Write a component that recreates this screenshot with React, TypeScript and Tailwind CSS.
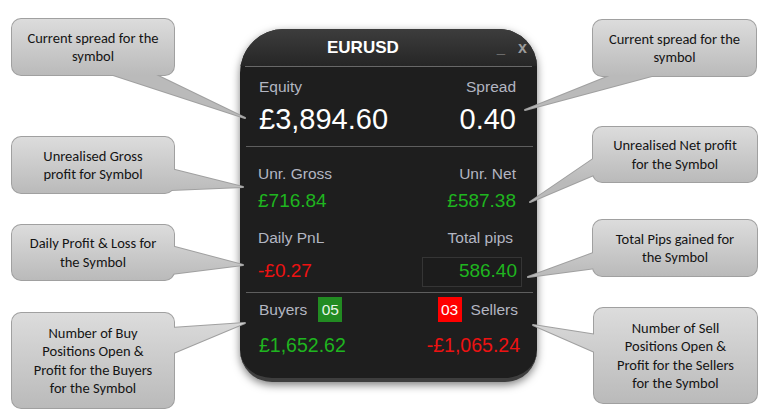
import React from "react";

type Pt = [number, number];
type Callout = { x: number; y: number; w: number; h: number; tail: Pt[]; lines: string[] };

const callouts: Callout[] = [
  { x: 12, y: 19, w: 162, h: 56, tail: [[104, 72], [150, 72], [245, 118]], lines: ["Current spread for the", "symbol"] },
  { x: 593, y: 20, w: 163, h: 56, tail: [[617, 73], [663, 73], [525, 110]], lines: ["Current spread for the", "symbol"] },
  { x: 12, y: 137, w: 162, h: 56, tail: [[171, 169], [171, 190], [243, 187]], lines: ["Unrealised Gross", "profit for Symbol"] },
  { x: 12, y: 225, w: 162, h: 55, tail: [[171, 246], [171, 274], [243, 265]], lines: ["Daily Profit & Loss for", "the Symbol"] },
  { x: 593, y: 127, w: 164, h: 55, tail: [[596, 157], [596, 174], [530, 202]], lines: ["Unrealised Net profit", "for the Symbol"] },
  { x: 593, y: 220, w: 164, h: 56, tail: [[596, 252], [596, 268], [528, 277]], lines: ["Total Pips gained for", "the Symbol"] },
  { x: 12, y: 313, w: 162, h: 95, tail: [[171, 328], [171, 354], [245, 323]], lines: ["Number of Buy", "Positions Open &", "Profit for the Buyers", "for the Symbol"] },
  { x: 594, y: 308, w: 163, h: 95, tail: [[597, 335], [597, 353], [533, 325]], lines: ["Number of Sell", "Positions Open &", "Profit for the Sellers", "for the Symbol"] },
];

function CalloutShapes() {
  return (
    <svg width="777" height="415" viewBox="0 0 777 415" className="absolute left-0 top-0 pointer-events-none">
      <defs>
        {callouts.map((c, i) => (
          <linearGradient key={i} id={`cg${i}`} gradientUnits="userSpaceOnUse" x1="0" y1={c.y} x2="0" y2={c.y + c.h}>
            <stop offset="0" stopColor="#dcdcdc" />
            <stop offset="1" stopColor="#bababa" />
          </linearGradient>
        ))}
      </defs>
      {callouts.map((c, i) => {
        const pts = c.tail.map((p) => p.join(",")).join(" ");
        return (
          <g key={i}>
            <rect x={c.x} y={c.y} width={c.w} height={c.h} rx={9} fill="#a0a0a0" stroke="#a0a0a0" strokeWidth={2} />
            <polygon points={pts} fill="#a0a0a0" stroke="#a0a0a0" strokeWidth={2} strokeLinejoin="round" />
            <rect x={c.x} y={c.y} width={c.w} height={c.h} rx={9} fill={`url(#cg${i})`} />
            <polygon points={pts} fill={`url(#cg${i})`} />
          </g>
        );
      })}
    </svg>
  );
}

function CalloutTexts() {
  return (
    <>
      {callouts.map((c, i) => (
        <div
          key={i}
          className="absolute flex flex-col items-center justify-center text-center text-[14.5px] leading-[18.5px] text-[#141414]"
          style={{ left: c.x, top: c.y, width: c.w, height: c.h, fontFamily: "Carlito, Lato, 'Open Sans', sans-serif" }}
        >
          {c.lines.map((l, j) => (
            <div key={j} className="whitespace-nowrap">
              {l}
            </div>
          ))}
        </div>
      ))}
    </>
  );
}

function Widget() {
  return (
    <div className="ml-[240px] mt-[29px] w-[297px] h-[353px] rounded-tl-[44px] rounded-tr-[38px] rounded-b-[32px] bg-[#1e1e1e] border-b-[4px] border-[#3e3e3e] shadow-[0_3px_8px_rgba(0,0,0,0.5)] overflow-hidden font-['Liberation_Sans',Arial,sans-serif] flex flex-col">
      <div className="h-[37px] bg-gradient-to-b from-[#3d3d3d] to-[#262626] flex items-center shrink-0">
        <div className="ml-[87px] text-[17px] font-bold text-white leading-none">EURUSD</div>
        <div className="ml-auto mr-[10px] flex items-end gap-[13px] text-[#9c9c9c] font-bold leading-none">
          <span className="text-[15px] mb-[1px]">_</span>
          <span className="text-[16px]">x</span>
        </div>
      </div>
      <div className="mx-[5px] h-[1px] bg-[#686868] shrink-0" />
      <div className="pl-[19px] pr-[21px] flex justify-between leading-none">
        <div>
          <div className="mt-[12px] text-[15.5px] text-[#b3b6c2]">Equity</div>
          <div className="mt-[10px] text-[29px] text-white">£3,894.60</div>
        </div>
        <div className="text-right">
          <div className="mt-[12px] text-[15.5px] text-[#b3b6c2]">Spread</div>
          <div className="mt-[10px] text-[29px] text-white">0.40</div>
        </div>
      </div>
      <div className="mt-[12.5px] ml-[6px] mr-[4px] h-[1px] bg-[#5e5e5e] shrink-0" />
      <div className="pl-[18px] pr-[21px] flex justify-between leading-none">
        <div>
          <div className="mt-[19px] text-[15.5px] text-[#b3b6c2]">Unr. Gross</div>
          <div className="mt-[9px] text-[19px] text-[#1fb51f]">£716.84</div>
        </div>
        <div className="text-right">
          <div className="mt-[19px] text-[15.5px] text-[#b3b6c2]">Unr. Net</div>
          <div className="mt-[9px] text-[19px] text-[#1fb51f]">£587.38</div>
        </div>
      </div>
      <div className="pl-[18px] pr-[21px] flex justify-between leading-none">
        <div>
          <div className="mt-[20.5px] text-[15.5px] text-[#b3b6c2]">Daily PnL</div>
          <div className="mt-[15px] text-[19px] text-[#ee1212]">-£0.27</div>
        </div>
        <div className="flex flex-col items-end">
          <div className="mt-[20.5px] mr-[3px] text-[15.5px] text-[#b3b6c2]">Total pips</div>
          <div className="mt-[11.5px] -mr-[6px] w-[100px] h-[30px] border border-[#353535] bg-[#1c1c1c] flex items-start justify-end pr-[4px] pt-[3px]">
            <span className="text-[19px] text-[#1fb51f]">586.40</span>
          </div>
        </div>
      </div>
      <div className="mt-[5px] ml-[6px] mr-[4px] h-[1px] bg-[#5e5e5e] shrink-0" />
      <div className="pl-[19px] pr-[19px] mt-[4px] h-[25px] flex items-center leading-none">
        <span className="text-[15.5px] text-[#b3b6c2]">Buyers</span>
        <span className="ml-[11px] w-[24px] h-[25px] bg-[#228b22] text-[#e8f5e8] text-[15.5px] flex items-center justify-center">05</span>
        <span className="ml-auto w-[24px] h-[25px] bg-[#ff0000] text-white text-[15.5px] flex items-center justify-center">03</span>
        <span className="ml-[9px] text-[15.5px] text-[#b3b6c2]">Sellers</span>
      </div>
      <div className="pl-[19px] pr-[17px] mt-[13.5px] flex justify-between leading-none">
        <span className="text-[19.5px] text-[#1fb51f]">£1,652.62</span>
        <span className="text-[19.5px] text-[#ee1212]">-£1,065.24</span>
      </div>
    </div>
  );
}

export default function App() {
  return (
    <div className="relative w-[777px] h-[415px] bg-white overflow-hidden">
      <Widget />
      <CalloutShapes />
      <CalloutTexts />
    </div>
  );
}
